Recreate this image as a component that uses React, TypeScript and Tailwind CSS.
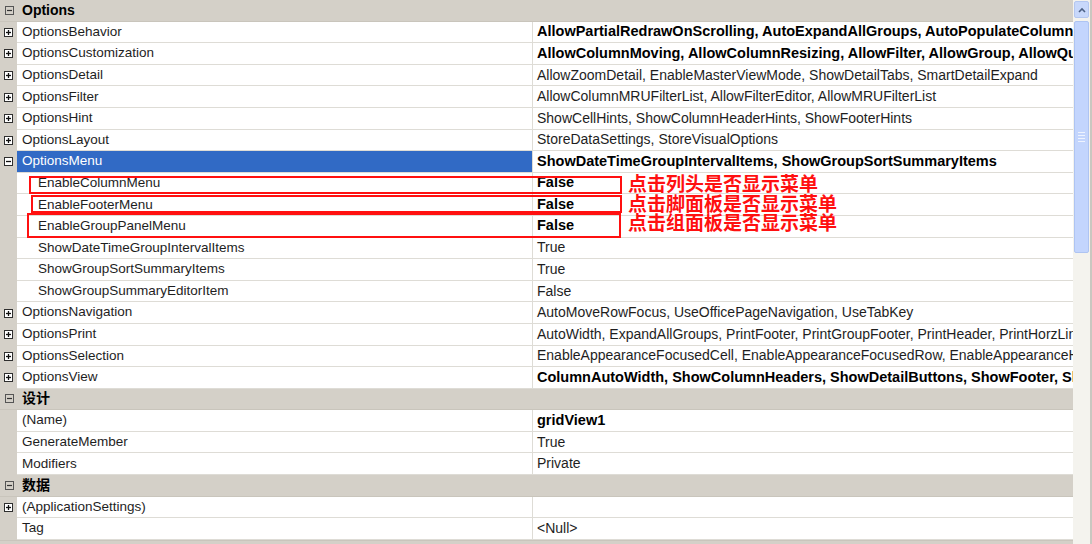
import React from "react";

type Row =
  | { kind: "cat"; name: string }
  | { kind: "prop"; name: string; value?: string; bold?: boolean; expand?: "plus" | "minus"; child?: boolean; selected?: boolean };

const rows: Row[] = [
  { kind: "cat", name: "Options" },
  { kind: "prop", name: "OptionsBehavior", expand: "plus", bold: true, value: "AllowPartialRedrawOnScrolling, AutoExpandAllGroups, AutoPopulateColumns, AutoSelectAllInEditor" },
  { kind: "prop", name: "OptionsCustomization", expand: "plus", bold: true, value: "AllowColumnMoving, AllowColumnResizing, AllowFilter, AllowGroup, AllowQuickHideColumns" },
  { kind: "prop", name: "OptionsDetail", expand: "plus", value: "AllowZoomDetail, EnableMasterViewMode, ShowDetailTabs, SmartDetailExpand" },
  { kind: "prop", name: "OptionsFilter", expand: "plus", value: "AllowColumnMRUFilterList, AllowFilterEditor, AllowMRUFilterList" },
  { kind: "prop", name: "OptionsHint", expand: "plus", value: "ShowCellHints, ShowColumnHeaderHints, ShowFooterHints" },
  { kind: "prop", name: "OptionsLayout", expand: "plus", value: "StoreDataSettings, StoreVisualOptions" },
  { kind: "prop", name: "OptionsMenu", expand: "minus", selected: true, bold: true, value: "ShowDateTimeGroupIntervalItems, ShowGroupSortSummaryItems" },
  { kind: "prop", name: "EnableColumnMenu", child: true, bold: true, value: "False" },
  { kind: "prop", name: "EnableFooterMenu", child: true, bold: true, value: "False" },
  { kind: "prop", name: "EnableGroupPanelMenu", child: true, bold: true, value: "False" },
  { kind: "prop", name: "ShowDateTimeGroupIntervalItems", child: true, value: "True" },
  { kind: "prop", name: "ShowGroupSortSummaryItems", child: true, value: "True" },
  { kind: "prop", name: "ShowGroupSummaryEditorItem", child: true, value: "False" },
  { kind: "prop", name: "OptionsNavigation", expand: "plus", value: "AutoMoveRowFocus, UseOfficePageNavigation, UseTabKey" },
  { kind: "prop", name: "OptionsPrint", expand: "plus", value: "AutoWidth, ExpandAllGroups, PrintFooter, PrintGroupFooter, PrintHeader, PrintHorzLines" },
  { kind: "prop", name: "OptionsSelection", expand: "plus", value: "EnableAppearanceFocusedCell, EnableAppearanceFocusedRow, EnableAppearanceHideSelection" },
  { kind: "prop", name: "OptionsView", expand: "plus", bold: true, value: "ColumnAutoWidth, ShowColumnHeaders, ShowDetailButtons, ShowFooter, ShowGroupPanel" },
  { kind: "cat", name: "设计" },
  { kind: "prop", name: "(Name)", bold: true, value: "gridView1" },
  { kind: "prop", name: "GenerateMember", value: "True" },
  { kind: "prop", name: "Modifiers", value: "Private" },
  { kind: "cat", name: "数据" },
  { kind: "prop", name: "(ApplicationSettings)", expand: "plus", value: "" },
  { kind: "prop", name: "Tag", value: "<Null>" },
];

const notes = ["点击列头是否显示菜单", "点击脚面板是否显示菜单", "点击组面板是否显示菜单"];

const ExpandBox = ({ type }: { type: "plus" | "minus" }) => (
  <svg width="9" height="9" viewBox="0 0 9 9" className="block">
    <rect x="0.5" y="0.5" width="8" height="8" fill="white" stroke="#2e2e2e" />
    <path d="M2 4.5h5" stroke="#111" strokeWidth="1.3" />
    {type === "plus" && <path d="M4.5 2v5" stroke="#111" strokeWidth="1.3" />}
  </svg>
);

const CatBox = () => (
  <svg width="9" height="9" viewBox="0 0 9 9" className="block">
    <rect x="0.5" y="0.5" width="8" height="8" fill="none" stroke="#555" />
    <path d="M2 4.5h5" stroke="#333" strokeWidth="1.2" />
  </svg>
);

const App = () => {
  return (
    <div
      className="relative flex h-[544px] w-[1092px] overflow-hidden bg-[#d4d0c8] text-[13.5px] text-[#1e1e1e]"
      style={{ fontFamily: "Tahoma, 'Liberation Sans', 'Noto Sans CJK SC', sans-serif" }}
    >
      {/* grid */}
      <div className="flex w-[1073px] flex-col">
        {rows.map((row, i) =>
          row.kind === "cat" ? (
            <div key={i} className="flex h-[21.6px] shrink-0 items-center border-b border-[#c9c5bc] bg-[#d4d0c8]">
              <div className="flex w-[17px] justify-center pl-[1px]">
                <CatBox />
              </div>
              <span className="pl-[5px] text-[14px] font-bold text-black">{row.name}</span>
            </div>
          ) : (
            <div key={i} className="flex h-[21.6px] shrink-0 items-stretch">
              <div className="flex w-[17px] shrink-0 items-center justify-center bg-[#d4d0c8]">
                {row.expand && <ExpandBox type={row.expand} />}
              </div>
              <div
                className={`flex w-[516px] shrink-0 items-center overflow-hidden whitespace-nowrap border-b border-r border-[#dedcd6] ${
                  row.selected ? "bg-[#316ac5] text-white" : "bg-white"
                } ${row.child ? "pl-[21px]" : "pl-[5px]"}`}
              >
                {row.name}
              </div>
              <div
                className={`flex min-w-0 flex-1 items-center overflow-hidden whitespace-nowrap border-b border-[#dedcd6] bg-white pl-[4px] ${
                  row.bold ? "text-[14.5px] font-bold text-black" : "text-[14px]"
                }`}
              >
                {row.value}
              </div>
            </div>
          )
        )}
        <div className="h-[4px] border-t border-[#c9c5bc] bg-[#d4d0c8]" />
      </div>

      {/* scrollbar */}
      <div className="flex w-[19px] flex-col border-r-2 border-[#c9c7c0] bg-[#f4f3ee] pl-[1px] pr-[1px]">
        <div className="mt-[1px] flex h-[17px] items-center justify-center rounded-[2px] border border-[#b4c7f0] bg-[#c8d8fb]">
          <svg width="8" height="6" viewBox="0 0 8 6">
            <path d="M1 5l3-3 3 3" fill="none" stroke="#4d6185" strokeWidth="1.6" />
          </svg>
        </div>
        <div className="mt-[3px] flex h-[232px] items-center justify-center rounded-[2px] border border-[#aec4f2] bg-[#c3d5fd]">
          <div className="flex flex-col gap-[2px]">
            <div className="h-px w-[7px] bg-[#eef3ff]" />
            <div className="h-px w-[7px] bg-[#eef3ff]" />
            <div className="h-px w-[7px] bg-[#eef3ff]" />
            <div className="h-px w-[7px] bg-[#eef3ff]" />
          </div>
        </div>
      </div>

      {/* red annotation boxes */}
      <div className="absolute left-[29px] top-[176px] h-[18px] w-[593px] border-2 border-[#ff1010]" />
      <div className="absolute left-[31px] top-[195px] h-[18px] w-[591px] border-2 border-[#ff1010]" />
      <div className="absolute left-[27px] top-[213px] h-[25px] w-[594px] border-2 border-[#ff1010]" />
      <div className="absolute left-[628px] top-[175px] flex flex-col text-[19px] font-bold leading-[19.5px] text-[#ff1010]">
        {notes.map((n) => (
          <span key={n}>{n}</span>
        ))}
      </div>
    </div>
  );
};

export default App;
